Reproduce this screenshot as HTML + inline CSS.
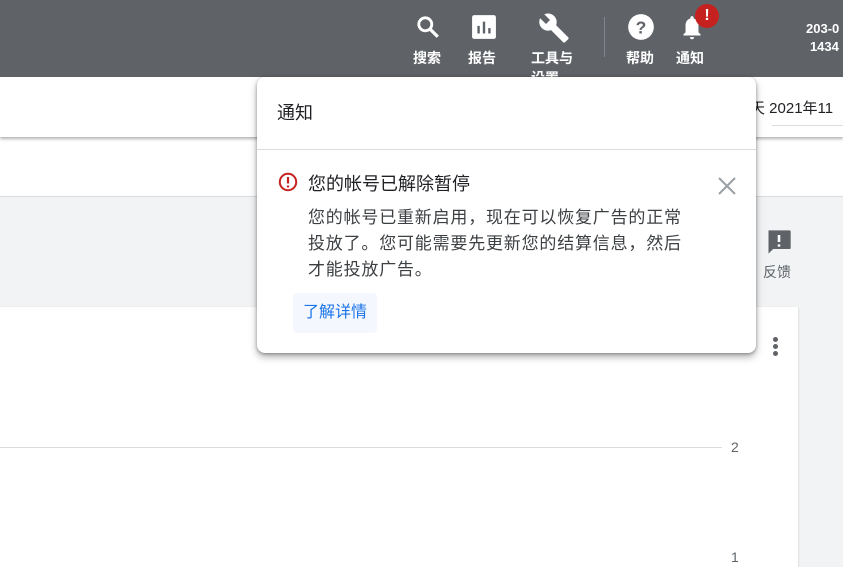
<!DOCTYPE html>
<html><head><meta charset="utf-8"><style>
*{margin:0;padding:0;box-sizing:border-box}
body{width:843px;height:554px;overflow:hidden;position:relative;background:#f1f3f4;font-family:"Liberation Sans","Noto Sans CJK SC",sans-serif}
.hdr{position:absolute;left:0;top:0;width:843px;height:77px;background:#5f6368;color:#fff}
.it{position:absolute;top:48px;font-size:14px;font-weight:bold;color:#fff}
.band1{position:absolute;left:0;top:77px;width:843px;height:60px;background:#fff;box-shadow:0 2px 3px rgba(0,0,0,.3)}
.band2{position:absolute;left:0;top:137px;width:843px;height:60px;background:#fff;border-bottom:1px solid #dadce0}
.card{position:absolute;left:-10px;top:307px;width:808px;height:260px;background:#fff;box-shadow:0 1px 2px rgba(0,0,0,.2)}
.pop{position:absolute;left:257px;top:77px;width:499px;height:276px;background:#fff;border-radius:8px;box-shadow:0 4px 8px rgba(0,0,0,.3),0 1px 3px rgba(0,0,0,.3)}
</style></head><body>
<div class="hdr">
<svg style="position:absolute;left:415px;top:14px" width="26" height="26" viewBox="0 0 24 24"><circle cx="9.5" cy="9.5" r="6" fill="none" stroke="#fff" stroke-width="2.6"/><path d="M14 14l7 7" stroke="#fff" stroke-width="3"/></svg>
<svg style="position:absolute;left:471px;top:14px" width="26" height="26" viewBox="0 0 24 24"><rect x="1" y="1" width="22" height="22" rx="2" fill="#fff"/><path d="M7 11v7M12 7v11M17 13v5" stroke="#5f6368" stroke-width="2.2"/></svg>
<svg style="position:absolute;left:538px;top:12px" width="32" height="32" viewBox="0 0 24 24"><path d="M22.7 19l-9.1-9.1c.9-2.3.4-5-1.5-6.9-2-2-5-2.4-7.4-1.3L9 6 6 9 1.6 4.7C.4 7.1.9 10.1 2.9 12.1c1.9 1.9 4.6 2.4 6.9 1.5l9.1 9.1c.4.4 1 .4 1.4 0l2.3-2.3c.5-.4.5-1.1.1-1.4z" fill="#fff"/></svg>
<div style="position:absolute;left:604px;top:17px;width:1px;height:40px;background:#80868b"></div>
<svg style="position:absolute;left:627px;top:13px" width="28" height="28" viewBox="0 0 24 24"><circle cx="12" cy="12" r="11" fill="#fff"/><text x="12" y="17.5" text-anchor="middle" font-size="15" font-weight="bold" fill="#5f6368" font-family="Liberation Sans">?</text></svg>
<svg style="position:absolute;left:679px;top:14px" width="26" height="28" viewBox="0 0 24 26"><path d="M12 2c-1 0-1.5.7-1.5 1.5v.7C7.6 4.9 6 7.5 6 10.5V17l-2 2v1h16v-1l-2-2v-6.5c0-3-1.6-5.6-4.5-6.3v-.7C13.5 2.7 13 2 12 2zM10 21.5a2 2 0 0 0 4 0z" fill="#fff"/></svg>
<div style="position:absolute;left:695px;top:4px;width:24px;height:24px;border-radius:50%;background:#c5221f;color:#fff;font-weight:bold;font-size:16px;text-align:center;line-height:24px">!</div>
<div class="it" style="left:413px">搜索</div>
<div class="it" style="left:468px">报告</div>
<div class="it" style="left:531px">工具与<br>设置</div>
<div class="it" style="left:626px">帮助</div>
<div class="it" style="left:676px">通知</div>
<div style="position:absolute;left:806px;top:20px;font-size:13px;font-weight:bold;line-height:18px;text-align:center">203-0<br>&nbsp;1434</div>
</div>
<div class="band2"></div>
<div class="band1"><div style="position:absolute;left:750px;top:20px;font-size:15px;color:#202124">天 2021年11</div><div style="position:absolute;left:772px;top:48px;width:80px;height:1px;background:#dadce0"></div></div>
<svg style="position:absolute;left:765px;top:228px" width="28" height="28" viewBox="0 0 24 24"><path d="M3 2h18c.6 0 1 .4 1 1v14c0 .6-.4 1-1 1H7l-4 4z" fill="#5f6368"/><path d="M12 6v6M12 14v2" stroke="#fff" stroke-width="2.2"/></svg>
<div style="position:absolute;left:763px;top:262px;font-size:14px;color:#5f6368">反馈</div>
<div class="card">
<div style="position:absolute;left:783px;top:30px;width:5px;height:5px;border-radius:50%;background:#5f6368;box-shadow:0 7px 0 #5f6368,0 14px 0 #5f6368"></div>
<div style="position:absolute;left:0;top:140px;width:732px;height:1px;background:#dadce0"></div>
<div style="position:absolute;left:741px;top:132px;font-size:14px;color:#5f6368">2</div>
<div style="position:absolute;left:741px;top:242px;font-size:14px;color:#5f6368">1</div>
</div>
<div class="pop">
<div style="position:absolute;left:20px;top:22px;font-size:18px;color:#202124">通知</div>
<div style="position:absolute;left:0;top:72px;width:499px;height:1px;background:#dadce0"></div>
<svg style="position:absolute;left:21px;top:95px" width="20" height="20" viewBox="0 0 20 20"><circle cx="10" cy="10" r="8.2" fill="none" stroke="#c5221f" stroke-width="2"/><path d="M10 5v6.5M10 13.5v2" stroke="#c5221f" stroke-width="2.2"/></svg>
<div style="position:absolute;left:51px;top:93px;font-size:18px;color:#202124">您的帐号已解除暂停</div>
<svg style="position:absolute;left:461px;top:100px" width="18" height="18" viewBox="0 0 18 18"><path d="M1 1l16 16M17 1L1 17" stroke="#9aa0a6" stroke-width="2"/></svg>
<div style="position:absolute;left:51px;top:128px;white-space:nowrap;font-size:17px;letter-spacing:0.8px;line-height:26px;color:#3c4043">您的帐号已重新启用，现在可以恢复广告的正常<br>投放了。您可能需要先更新您的结算信息，然后<br>才能投放广告。</div>
<div style="position:absolute;left:36px;top:216px;width:84px;height:40px;background:#f4f8fe;border-radius:4px;color:#1a73e8;font-size:16px;line-height:40px;text-align:center">了解详情</div>
</div>
</body></html>
